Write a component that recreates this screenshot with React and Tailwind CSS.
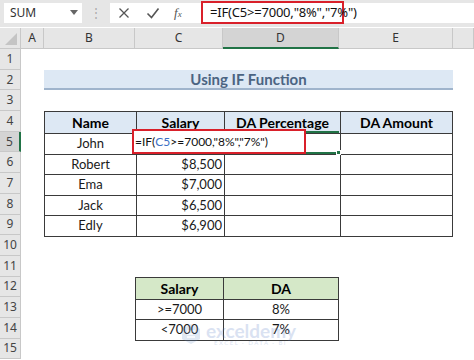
import React from "react";

const rows = Array.from({ length: 15 }, (_, i) => i + 1);
const cols = ["A", "B", "C", "D", "E", ""];

const data = [
  ["Robert", "$8,500"],
  ["Ema", "$7,000"],
  ["Jack", "$6,500"],
  ["Edly", "$6,900"],
];

export default function App() {
  const cell = "font-['Lato',sans-serif] text-[13px] text-[#1a1a1a]";
  return (
    <div className="w-[474px] h-[360px] overflow-hidden bg-white font-['Liberation_Sans',sans-serif]">
      {/* formula bar */}
      <div className="h-[27px] bg-[#e6e6e6] flex items-center pt-[1px] pb-[3px]">
        <div className="ml-[4px] w-[78px] h-[20px] bg-white flex items-center justify-between pl-[6px] pr-[4px] text-[12px] text-[#333] font-['Noto_Sans',sans-serif]">
          <span>SUM</span>
          <svg width="8" height="5" viewBox="0 0 8 5"><path d="M0 0h8L4 5z" fill="#666" /></svg>
        </div>
        <div className="w-[28px] flex justify-center text-[#aaa] text-[12px] leading-none">⋮</div>
        <div className="flex-1 h-[20px] bg-white flex items-center">
          <div className="w-[90px] flex items-center pl-[8px] text-[#555]">
            <svg width="12" height="12" viewBox="0 0 12 12"><path d="M1.5 1.5l9 9M10.5 1.5l-9 9" stroke="#555" strokeWidth="1.3" /></svg>
            <svg className="ml-[16px]" width="14" height="12" viewBox="0 0 14 12"><path d="M1.5 6.5l4 4 7-9" stroke="#555" strokeWidth="1.6" fill="none" /></svg>
            <span className="ml-[14px] font-['Liberation_Serif',serif] italic text-[13px] text-[#555]">f<span className="text-[9px]">x</span></span>
          </div>
          <div className="ml-[1px] h-[23px] w-[143px] border-[2.5px] border-[#d9202a] flex items-center pl-[7px] text-[13px] text-[#111] font-['Noto_Sans',sans-serif] tracking-[-0.2px]">
            =IF(C5&gt;=7000,"8%","7%")
          </div>
        </div>
      </div>

      {/* sheet */}
      <div className="relative mt-[1px] grid grid-cols-[21px_23px_91px_88px_116px_114px_1fr] grid-rows-[21px_repeat(15,20.7px)]">
        {/* corner */}
        <div className="bg-[#e6e6e6] border-r border-b border-[#c8c8c8] flex items-end justify-end p-[3px]">
          <svg width="12" height="12" viewBox="0 0 12 12"><path d="M12 0V12H0z" fill="#c4c4c4" /></svg>
        </div>
        {cols.map((c, i) => (
          <div
            key={"c" + i}
            className={
              c === "D"
                ? "bg-[#d4d4d4] border-r border-[#c8c8c8] border-b-2 border-b-[#217346] flex items-center justify-center text-[12px] text-[#333] font-['Noto_Sans',sans-serif]"
                : "bg-[#e6e6e6] border-r border-b border-[#c8c8c8] flex items-center justify-center text-[12px] text-[#333] font-['Noto_Sans',sans-serif]"
            }
          >
            {c}
          </div>
        ))}
        {rows.map((r) => (
          <div
            key={"r" + r}
            style={{ gridRow: r + 1, gridColumn: 1 }}
            className={
              r === 5
                ? "bg-[#d4d4d4] border-b border-[#c8c8c8] border-r-2 border-r-[#217346] flex items-center justify-center text-[12px] text-[#444] font-['Noto_Sans',sans-serif]"
                : "bg-[#e6e6e6] border-b border-r border-[#c8c8c8] flex items-center justify-center text-[12px] text-[#444] font-['Noto_Sans',sans-serif]"
            }
          >
            {r}
          </div>
        ))}

        {/* title */}
        <div className="col-start-3 col-span-4 row-start-3 bg-[#dde8f4] border-b-2 border-[#9fb4cc] flex items-center justify-center font-['Lato',sans-serif] font-bold text-[15px] text-[#4b6482]">
          Using IF Function
        </div>

        {/* main table */}
        <div className="col-start-3 col-span-4 row-start-5 row-span-6">
          <table className={"w-full h-full table-fixed border-collapse " + cell}>
            <colgroup>
              <col className="w-[92px]" />
              <col className="w-[88px]" />
              <col className="w-[116px]" />
              <col />
            </colgroup>
            <tbody>
              <tr className="bg-[#dde8f4] font-bold text-[14px] text-black">
                <td className="border border-[#3a3a3a] text-center p-0">Name</td>
                <td className="border border-[#3a3a3a] text-center p-0">Salary</td>
                <td className="border border-[#3a3a3a] text-center p-0">DA Percentage</td>
                <td className="border border-[#3a3a3a] text-center p-0">DA Amount</td>
              </tr>
              <tr>
                <td className="border border-[#3a3a3a] text-center p-0">John</td>
                <td className="border border-[#3a3a3a] p-0"></td>
                <td className="border border-[#3a3a3a] p-0"></td>
                <td className="border border-[#3a3a3a] p-0"></td>
              </tr>
              {data.map(([n, s]) => (
                <tr key={n}>
                  <td className="border border-[#3a3a3a] text-center p-0">{n}</td>
                  <td className="border border-[#3a3a3a] text-right pr-[2px] p-0">{s}</td>
                  <td className="border border-[#3a3a3a] p-0"></td>
                  <td className="border border-[#3a3a3a] p-0"></td>
                </tr>
              ))}
            </tbody>
          </table>
        </div>

        {/* small table */}
        <div className="col-start-4 col-span-2 row-start-13 row-span-3">
          <table className={"w-full h-full table-fixed border-collapse " + cell}>
            <colgroup>
              <col className="w-[88px]" />
              <col />
            </colgroup>
            <tbody>
              <tr className="bg-[#d5e8c8] font-bold text-[14px] text-black">
                <td className="border border-[#3a3a3a] text-center p-0">Salary</td>
                <td className="border border-[#3a3a3a] text-center p-0">DA</td>
              </tr>
              <tr>
                <td className="border border-[#3a3a3a] text-center p-0">&gt;=7000</td>
                <td className="border border-[#3a3a3a] text-center p-0">8%</td>
              </tr>
              <tr>
                <td className="border border-[#3a3a3a] text-center p-0">&lt;7000</td>
                <td className="border border-[#3a3a3a] text-center p-0">7%</td>
              </tr>
            </tbody>
          </table>
        </div>

        {/* selection of D5 */}
        <div className="absolute left-[223px] top-[103px] w-[116px] h-[23px] border-y-2 border-[#217346]" />
        <div className="absolute left-[336px] top-[122px] w-[5px] h-[5px] bg-[#217346] border border-white" />

        {/* in-cell editor */}
        <div className="absolute left-[132px] top-[101px] w-[174px] h-[25px] bg-white border-[2.5px] border-[#d9202a] flex items-center pl-[1px] font-['Lato',sans-serif] text-[12px] text-[#111]">
          =IF(<span className="text-[#3b6fc4]">C5</span>&gt;=7000,"8%","7%")
        </div>

        {/* watermark */}
        <div className="absolute left-[180px] top-[293px] flex items-center gap-[4px] opacity-20 pointer-events-none">
          <svg width="22" height="22" viewBox="0 0 22 22">
            <path d="M11 1l9 5v10l-9 5-9-5V6z" fill="#6a8fc8" />
            <path d="M7 8h8M7 11h6M7 14h8" stroke="#fff" strokeWidth="1.6" />
          </svg>
          <div className="flex flex-col leading-none">
            <span className="font-['Lato',sans-serif] font-bold text-[19px] text-[#4a72c0]">exceldemy</span>
            <span className="font-['Lato',sans-serif] text-[6px] tracking-[1.5px] text-[#4a72c0] pl-[8px]">EXCEL · DATA · BI</span>
          </div>
        </div>
      </div>
    </div>
  );
}
